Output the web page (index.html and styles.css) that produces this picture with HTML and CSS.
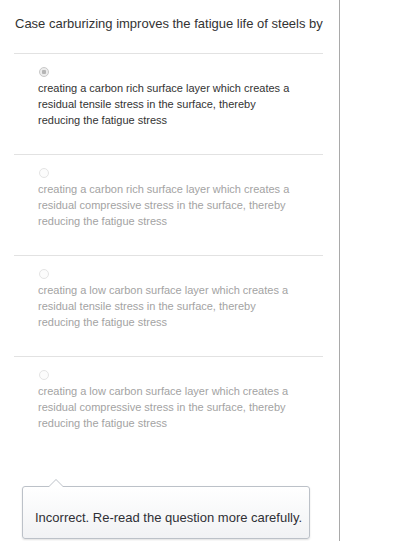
FILE: index.html
```html
<!DOCTYPE html>
<html lang="en">
<head>
    <meta charset="UTF-8">
    <meta name="viewport" content="width=device-width, initial-scale=1.0">
    <title>Question</title>
    <link rel="stylesheet" href="styles.css">
</head>
<body>
    <div class="layout">
        <div class="question-pane">
            <h1 class="question">Case carburizing improves the fatigue life of steels by</h1>
            <div class="choices">
                <div class="choice selected">
                    <span class="radio"></span>
                    <p>creating a carbon rich surface layer which creates a residual tensile stress in the surface, thereby reducing the fatigue stress</p>
                </div>
                <div class="choice">
                    <span class="radio"></span>
                    <p>creating a carbon rich surface layer which creates a residual compressive stress in the surface, thereby reducing the fatigue stress</p>
                </div>
                <div class="choice">
                    <span class="radio"></span>
                    <p>creating a low carbon surface layer which creates a residual tensile stress in the surface, thereby reducing the fatigue stress</p>
                </div>
                <div class="choice">
                    <span class="radio"></span>
                    <p>creating a low carbon surface layer which creates a residual compressive stress in the surface, thereby reducing the fatigue stress</p>
                </div>
            </div>
            <div class="feedback">Incorrect. Re-read the question more carefully.</div>
        </div>
        <div class="side-pane"></div>
    </div>
</body>
</html>
```

FILE: styles.css
```css
body {
    margin: 0;
    font-family: "Liberation Sans", Arial, sans-serif;
    background: #fff;
    color: #333;
}
.layout {
    display: flex;
    height: 100vh;
}
.question-pane {
    width: 309px;
    padding: 0 16px 0 14px;
    border-right: 1px solid #a9a9a9;
}
.side-pane {
    flex: 1;
}
.question {
    margin: 15px 0 20px 1px;
    font-size: 13px;
    font-weight: normal;
    line-height: 18px;
    color: #333;
}
.choice {
    border-top: 1px solid #e2e2e2;
    padding: 13px 23px 26px 24px;
    color: #a3a3a3;
}
.choice p {
    margin: 0;
    font-size: 11px;
    line-height: 16px;
}
.choice.selected {
    color: #333;
}
.radio {
    display: block;
    box-sizing: border-box;
    width: 10px;
    height: 10px;
    margin: 0 0 3px 1px;
    border: 1px solid #e4e4e4;
    border-radius: 50%;
    background: #fcfcfc;
}
.selected .radio {
    border-color: #c8c8c8;
    background: radial-gradient(circle, #b5b5b5 0, #b5b5b5 2px, #ececec 2.5px);
}
.feedback {
    position: relative;
    box-sizing: border-box;
    width: 288px;
    height: 53px;
    margin: 29px 0 0 8px;
    padding: 22px 0 0 12px;
    border: 1px solid #bcc1c8;
    border-radius: 3px;
    background: linear-gradient(#fff, #f1f2f4);
    box-shadow: 0 1px 2px rgba(0, 0, 0, 0.12);
    font-size: 13px;
    line-height: 18px;
    color: #2f3036;
}
/* little pointer on the top edge */
.feedback::before,
.feedback::after {
    content: "";
    position: absolute;
    left: 25px;
    border: 8px solid transparent;
    border-top: 0;
}
.feedback::before {
    top: -8px;
    border-bottom-color: #bcc1c8;
}
.feedback::after {
    top: -7px;
    border-bottom-color: #fff;
}
```
